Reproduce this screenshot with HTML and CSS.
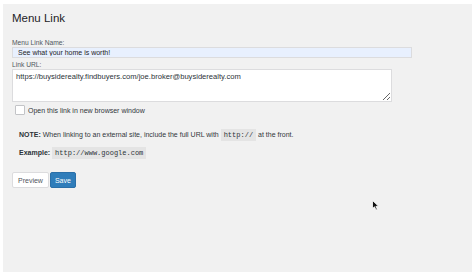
FILE: index.html
```html
<!DOCTYPE html>
<html lang="en">
<head>
    <meta charset="UTF-8">
    <title>Menu Link</title>
    <link rel="stylesheet" href="styles.css">
</head>
<body>
    <div class="panel">
        <h1 class="title">Menu Link</h1>
        <label class="field-label" for="link-name">Menu Link Name:</label>
        <input type="text" id="link-name" class="text-input" value="See what your home is worth!">
        <label class="field-label" for="link-url">Link URL:</label>
        <textarea id="link-url" class="url-input">https://buysiderealty.findbuyers.com/joe.broker@buysiderealty.com</textarea>
        <div class="check-row">
            <span class="checkbox"></span>
            <span>Open this link in new browser window</span>
        </div>
        <p class="note"><strong>NOTE:</strong> When linking to an external site, include the full URL with <code>http://</code> at the front.</p>
        <p class="note example"><strong>Example:</strong> <code>http://www.google.com</code></p>
        <div class="buttons">
            <button class="btn">Preview</button>
            <button class="btn btn-primary">Save</button>
        </div>
        <!-- mouse pointer left in the screenshot -->
        <svg class="pointer" width="8" height="11" viewBox="0 0 8 11">
            <path d="M0.5 0.5 L0.5 8.5 L2.5 6.8 L4 10 L5.3 9.4 L3.9 6.3 L6.6 6.3 Z" fill="#111" stroke="#fff" stroke-width="0.8"/>
        </svg>
    </div>
</body>
</html>
```

FILE: styles.css
```css
body {
    margin: 0;
    padding: 4px 2px 2px 3px;
    background-color: #ffffff;
    font-family: 'Liberation Sans', Arial, sans-serif;
    color: #32373c;
}
.panel {
    position: relative;
    height: 268px;
    padding: 6px 0 0 9px;
    box-sizing: border-box;
    background-color: #f1f1f1;
}
.title {
    margin: 0 0 13px;
    font-size: 11.5px;
    font-weight: normal;
    line-height: 16px;
    color: #1d2327;
}
.field-label {
    display: block;
    font-size: 6.7px;
    line-height: 8px;
    color: #50575e;
}
.text-input {
    display: block;
    width: 400px;
    height: 11px;
    margin: 0 0 3px;
    padding: 0 5px;
    box-sizing: border-box;
    border: 1px solid #dcdcde;
    background-color: #e8f0fe;
    font-family: inherit;
    font-size: 7px;
    color: #1d2327;
}
.url-input {
    display: block;
    width: 380px;
    height: 33px;
    margin: 0;
    padding: 2px 3px;
    box-sizing: border-box;
    border: 1px solid #dcdcde;
    background-color: #ffffff;
    font-family: inherit;
    font-size: 7.6px;
    line-height: 9px;
    color: #2c3338;
    resize: vertical;
}
.check-row {
    display: flex;
    align-items: center;
    gap: 3px;
    margin: 3px 0 0 3px;
    font-size: 7px;
}
.checkbox {
    width: 8px;
    height: 8px;
    border: 1px solid #c3c4c7;
    border-radius: 1px;
    background-color: #ffffff;
}
.note {
    margin: 13px 0 0 7px;
    font-size: 7px;
    line-height: 13px;
}
.note strong {
    color: #2c3338;
}
.example {
    margin-top: 4px;
}
code {
    padding: 2px 3px;
    background-color: #e4e4e4;
    font-family: 'Liberation Mono', monospace;
    font-size: 7px;
    color: #2c3338;
}
.buttons {
    display: flex;
    margin-top: 12px;
}
.btn {
    height: 16px;
    padding: 0 5px;
    border: 1px solid #dcdcde;
    border-radius: 2px;
    background-color: #ffffff;
    font-family: inherit;
    font-size: 7px;
    color: #50575e;
}
.btn-primary {
    margin-left: 1px;
    padding: 0 4px;
    border-color: #2a6fa8;
    background-color: #2f7dba;
    color: #ffffff;
}
.pointer {
    position: absolute;
    left: 369px;
    top: 196px;
}
```
